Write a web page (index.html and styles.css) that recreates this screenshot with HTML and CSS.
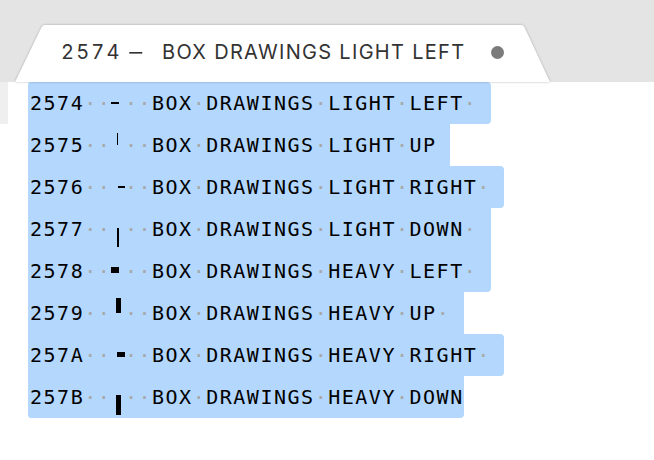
FILE: index.html
```html
<!DOCTYPE html>
<html>
<head>
<meta charset="utf-8">
<link rel="stylesheet" href="styles.css">
</head>
<body>
<div class="window">
  <div class="tabbar">
    <div class="tab">
      <svg class="tab-shape" width="535" height="57" viewBox="0 0 535 57" aria-hidden="true">
        <path d="M0 57 L26.5 2.2 Q27.5 0 30 0 L506 0 Q508.5 0 509.5 2.2 L535 57 Z" fill="#ffffff"/>
      </svg>
      <span class="tab-code">2574</span>
      <span class="tab-dash">–</span>
      <span class="tab-name">BOX DRAWINGS LIGHT LEFT</span>
      <span class="tab-dot"></span>
    </div>
  </div>
  <div class="editor">
    <div class="line current"><div class="gutter"></div><div class="sel tl rt rb nl">2574<span class="ws">··</span><span class="bx light-left">╴</span><span class="ws">··</span>BOX<span class="ws">·</span>DRAWINGS<span class="ws">·</span>LIGHT<span class="ws">·</span>LEFT<span class="ws">·</span></div></div>
    <div class="line"><div class="gutter"></div><div class="sel nl">2575<span class="ws">··</span><span class="bx light-up">╵</span><span class="ws">··</span>BOX<span class="ws">·</span>DRAWINGS<span class="ws">·</span>LIGHT<span class="ws">·</span>UP</div></div>
    <div class="line"><div class="gutter"></div><div class="sel rt rb nl">2576<span class="ws">··</span><span class="bx light-right">╶</span><span class="ws">··</span>BOX<span class="ws">·</span>DRAWINGS<span class="ws">·</span>LIGHT<span class="ws">·</span>RIGHT<span class="ws">·</span></div></div>
    <div class="line"><div class="gutter"></div><div class="sel nl">2577<span class="ws">··</span><span class="bx light-down">╷</span><span class="ws">··</span>BOX<span class="ws">·</span>DRAWINGS<span class="ws">·</span>LIGHT<span class="ws">·</span>DOWN<span class="ws">·</span></div></div>
    <div class="line"><div class="gutter"></div><div class="sel rb nl">2578<span class="ws">··</span><span class="bx heavy-left">╸</span><span class="ws">··</span>BOX<span class="ws">·</span>DRAWINGS<span class="ws">·</span>HEAVY<span class="ws">·</span>LEFT<span class="ws">·</span></div></div>
    <div class="line"><div class="gutter"></div><div class="sel nl">2579<span class="ws">··</span><span class="bx heavy-up">╹</span><span class="ws">··</span>BOX<span class="ws">·</span>DRAWINGS<span class="ws">·</span>HEAVY<span class="ws">·</span>UP<span class="ws">·</span></div></div>
    <div class="line"><div class="gutter"></div><div class="sel rt rb nl">257A<span class="ws">··</span><span class="bx heavy-right">╺</span><span class="ws">··</span>BOX<span class="ws">·</span>DRAWINGS<span class="ws">·</span>HEAVY<span class="ws">·</span>RIGHT<span class="ws">·</span></div></div>
    <div class="line"><div class="gutter"></div><div class="sel bl rb">257B<span class="ws">··</span><span class="bx heavy-down">╻</span><span class="ws">··</span>BOX<span class="ws">·</span>DRAWINGS<span class="ws">·</span>HEAVY<span class="ws">·</span>DOWN</div></div>
  </div>
</div>
</body>
</html>
```

FILE: styles.css
```css
html, body {
  margin: 0;
  padding: 0;
  background: #ffffff;
}

.window {
  width: 654px;
  height: 460px;
  overflow: hidden;
  background: #ffffff;
}

.tabbar {
  height: 82px;
  background: #e4e4e4;
  display: flex;
  align-items: flex-end;
  padding-left: 15px;
  box-sizing: border-box;
}

.tab {
  position: relative;
  width: 535px;
  height: 57px;
  box-sizing: border-box;
  padding: 0 46px 3px 46px;
  display: flex;
  align-items: center;
  font-family: Inter, "Noto Sans", sans-serif;
  font-size: 20px;
  letter-spacing: 1.3px;
  color: #333333;
}

.tab-shape {
  position: absolute;
  left: 0;
  top: 0;
  z-index: 0;
  filter: drop-shadow(0 0 0.8px rgba(0, 0, 0, 0.28));
}

.tab > span {
  position: relative;
  z-index: 1;
}

.tab-code {
  letter-spacing: 2.2px;
  font-variant-numeric: tabular-nums;
}

.tab-dash {
  margin-left: 9px;
  display: inline-block;
  transform: scaleX(1.3);
}

.tab-name {
  margin-left: 20px;
}

.tab-dot {
  margin-left: auto;
  width: 13px;
  height: 13px;
  border-radius: 50%;
  background: #7b7b7b;
}

.editor {
  display: flex;
  flex-direction: column;
}

.line {
  display: flex;
  height: 42px;
}

.gutter {
  width: 8px;
  margin-right: 20px;
}

.line.current .gutter {
  background: #efefef;
}

.sel {
  background: #b4d7fd;
  padding-left: 2px;
  font-family: "DejaVu Sans Mono", monospace;
  font-size: 20px;
  letter-spacing: 1.51px;
  line-height: 42px;
  color: #000000;
  white-space: pre;
}

.sel.nl {
  padding-right: 13.55px;
}

.ws {
  color: #a8a8a8;
}

.bx {
  position: relative;
  display: inline-block;
  width: 13.55px;
  height: 42px;
  vertical-align: top;
  letter-spacing: 0;
  color: transparent;
}

.bx::after {
  content: "";
  position: absolute;
  background: #000000;
}

.light-left::after  { left: 0;     top: 20px;   width: 7.5px; height: 1.5px; }
.light-up::after    { left: 5.5px; top: 9px;    width: 1.5px; height: 12px; }
.light-right::after { left: 7px;   top: 20px;   width: 6.5px; height: 1.5px; }
.light-down::after  { left: 6px;   top: 20px;   width: 1.5px; height: 19px; }
.heavy-left::after  { left: 0;     top: 17px;   width: 8px;   height: 5.5px; }
.heavy-up::after    { left: 4.7px; top: 6px;    width: 5px;   height: 15px; }
.heavy-right::after { left: 5.7px; top: 17.5px; width: 7.7px; height: 5px; }
.heavy-down::after  { left: 4.7px; top: 19px;   width: 5px;   height: 20px; }

.tl { border-top-left-radius: 3px; }
.bl { border-bottom-left-radius: 3px; }
.rt { border-top-right-radius: 4px; }
.rb { border-bottom-right-radius: 4px; }
```
